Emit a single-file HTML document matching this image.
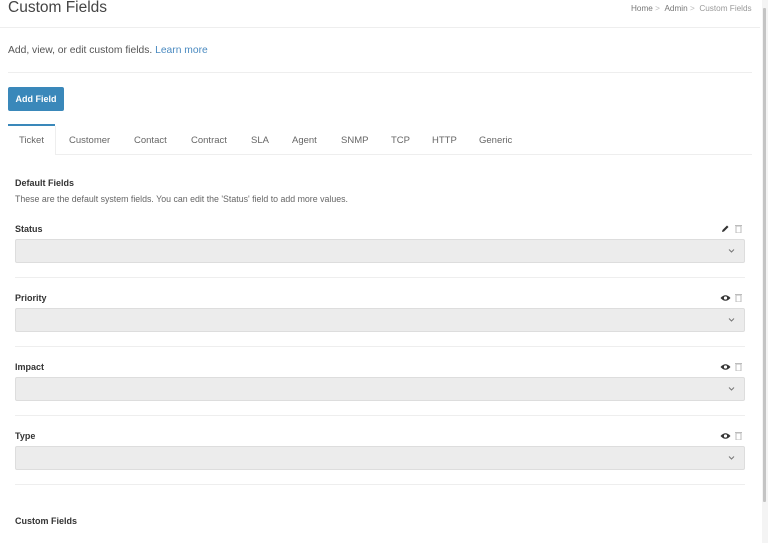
<!DOCTYPE html>
<html><head><style>
*{margin:0;padding:0;box-sizing:border-box}
body{width:768px;height:543px;overflow:hidden;background:#fff;font-family:"Liberation Sans",sans-serif;color:#333;position:relative}
.a{position:absolute;white-space:nowrap}
.hr{position:absolute;height:1px;background:#eee}
.sel{position:absolute;left:15px;width:730px;height:24px;background:#ececec;border:1px solid #ddd;border-radius:2px}
.lbl{position:absolute;left:15px;font-size:9px;font-weight:bold;color:#333}
.tab{position:absolute;top:135px;font-size:9.5px;color:#666}
.chev{position:absolute;right:8px;top:6px}
</style></head><body>
<div class="a" style="left:8px;top:-1px;font-size:15.5px;color:#444">Custom Fields</div>
<div class="a" style="left:631px;top:4px;font-size:8.2px;color:#777">Home <span style="color:#bbb">&gt;</span> &nbsp;Admin <span style="color:#bbb">&gt;</span> &nbsp;<span style="color:#999">Custom Fields</span></div>
<div class="hr" style="left:0;top:27px;width:760px"></div>
<div class="a" style="left:8px;top:45px;font-size:10.3px;color:#555">Add, view, or edit custom fields. <span style="color:#4a8ac0">Learn more</span></div>
<div class="hr" style="left:8px;top:72px;width:744px"></div>
<div class="a" style="left:8px;top:87px;width:56px;height:24px;background:#3a88ba;border-radius:2px;color:#fff;font-size:9px;font-weight:bold;line-height:24px;text-align:center">Add Field</div>
<div class="a" style="left:8px;top:124px;width:47px;height:2px;background:#3a88ba"></div>
<div class="a" style="left:55px;top:126px;width:1px;height:28px;background:#eee"></div>
<div class="hr" style="left:55px;top:154px;width:697px"></div>
<div class="tab" style="left:19px">Ticket</div>
<div class="tab" style="left:69px">Customer</div>
<div class="tab" style="left:134px">Contact</div>
<div class="tab" style="left:191px">Contract</div>
<div class="tab" style="left:251px">SLA</div>
<div class="tab" style="left:292px">Agent</div>
<div class="tab" style="left:341px">SNMP</div>
<div class="tab" style="left:391px">TCP</div>
<div class="tab" style="left:432px">HTTP</div>
<div class="tab" style="left:479px">Generic</div>
<div class="lbl" style="top:178px">Default Fields</div>
<div class="a" style="left:15px;top:194px;font-size:8.8px;color:#666">These are the default system fields. You can edit the 'Status' field to add more values.</div>

<div class="lbl" style="top:224px">Status</div>
<svg class="a" style="left:721px;top:224px" width="9" height="9" viewBox="0 0 9 9"><path d="M1 8 L1.5 6 L6 1.5 L7.5 3 L3 7.5Z" fill="#333"/></svg>
<svg class="a" style="left:735px;top:224px" width="7" height="9" viewBox="0 0 7 9"><rect x="1" y="2" width="5" height="7" fill="none" stroke="#bbb"/><rect x="0" y="1" width="7" height="1" fill="#bbb"/></svg>
<div class="sel" style="top:239px"><svg class="chev" width="9" height="9" viewBox="0 0 9 9"><path d="M2 3.5 L4.5 6 L7 3.5" fill="none" stroke="#777" stroke-width="1"/></svg></div>
<div class="hr" style="left:15px;top:277px;width:730px"></div>

<div class="lbl" style="top:293px">Priority</div>
<svg class="a" style="left:720px;top:294px" width="11" height="8" viewBox="0 0 11 8"><path d="M0.5 4 Q5.5 -1.5 10.5 4 Q5.5 9.5 0.5 4Z" fill="#333"/><circle cx="5.5" cy="4" r="1.6" fill="#fff"/></svg>
<svg class="a" style="left:735px;top:293px" width="7" height="9" viewBox="0 0 7 9"><rect x="1" y="2" width="5" height="7" fill="none" stroke="#bbb"/><rect x="0" y="1" width="7" height="1" fill="#bbb"/></svg>
<div class="sel" style="top:308px"><svg class="chev" width="9" height="9" viewBox="0 0 9 9"><path d="M2 3.5 L4.5 6 L7 3.5" fill="none" stroke="#777"/></svg></div>
<div class="hr" style="left:15px;top:346px;width:730px"></div>

<div class="lbl" style="top:362px">Impact</div>
<svg class="a" style="left:720px;top:363px" width="11" height="8" viewBox="0 0 11 8"><path d="M0.5 4 Q5.5 -1.5 10.5 4 Q5.5 9.5 0.5 4Z" fill="#333"/><circle cx="5.5" cy="4" r="1.6" fill="#fff"/></svg>
<svg class="a" style="left:735px;top:362px" width="7" height="9" viewBox="0 0 7 9"><rect x="1" y="2" width="5" height="7" fill="none" stroke="#bbb"/><rect x="0" y="1" width="7" height="1" fill="#bbb"/></svg>
<div class="sel" style="top:377px"><svg class="chev" width="9" height="9" viewBox="0 0 9 9"><path d="M2 3.5 L4.5 6 L7 3.5" fill="none" stroke="#777"/></svg></div>
<div class="hr" style="left:15px;top:415px;width:730px"></div>

<div class="lbl" style="top:431px">Type</div>
<svg class="a" style="left:720px;top:432px" width="11" height="8" viewBox="0 0 11 8"><path d="M0.5 4 Q5.5 -1.5 10.5 4 Q5.5 9.5 0.5 4Z" fill="#333"/><circle cx="5.5" cy="4" r="1.6" fill="#fff"/></svg>
<svg class="a" style="left:735px;top:431px" width="7" height="9" viewBox="0 0 7 9"><rect x="1" y="2" width="5" height="7" fill="none" stroke="#bbb"/><rect x="0" y="1" width="7" height="1" fill="#bbb"/></svg>
<div class="sel" style="top:446px"><svg class="chev" width="9" height="9" viewBox="0 0 9 9"><path d="M2 3.5 L4.5 6 L7 3.5" fill="none" stroke="#777"/></svg></div>
<div class="hr" style="left:15px;top:484px;width:730px"></div>

<div class="lbl" style="top:516px">Custom Fields</div>

<div class="a" style="left:762px;top:0;width:6px;height:543px;background:#f4f4f4"></div>
<div class="a" style="left:763px;top:8px;width:3px;height:494px;background:#c4c4c4;border-radius:1px"></div>
</body></html>
